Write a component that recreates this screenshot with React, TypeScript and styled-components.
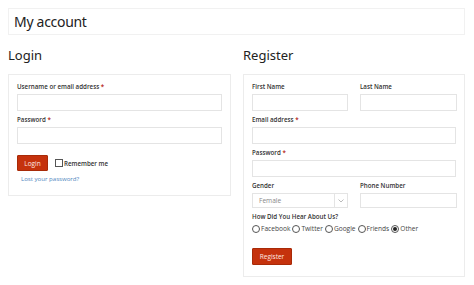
import styled, { createGlobalStyle } from 'styled-components';

const GlobalStyle = createGlobalStyle`
  html, body {
    margin: 0;
    padding: 0;
    background: #ffffff;
  }
  body {
    font-family: 'Open Sans', 'Noto Sans', sans-serif;
    color: #333333;
  }
`;

const Page = styled.div`
  width: 474px;
  height: 285px;
  box-sizing: border-box;
  padding: 8px 9px 0 8px;
  overflow: hidden;
`;

const TitleBar = styled.div`
  height: 27px;
  box-sizing: border-box;
  border: 1px solid #f1f1f1;
  display: flex;
  align-items: center;
  padding-left: 5px;
  font-family: 'Noto Sans', 'Open Sans', sans-serif;
  font-size: 14px;
  letter-spacing: -0.3px;
  color: #222222;
`;

const Columns = styled.div`
  display: grid;
  grid-template-columns: 223px 222px;
  column-gap: 12px;
  margin-top: 8px;
`;

const Column = styled.div`
  display: flex;
  flex-direction: column;
`;

const Heading = styled.h2`
  margin: 0 0 7px 0;
  height: 24px;
  display: flex;
  align-items: center;
  font-family: 'Noto Sans', 'Open Sans', sans-serif;
  font-weight: 400;
  font-size: 13px;
  color: #222222;
`;

const Card = styled.form`
  border: 1px solid #ececec;
  padding: 7px 8px 11px 8px;
  display: flex;
  flex-direction: column;
`;

const Row = styled.div`
  display: grid;
  grid-template-columns: 96px 97px;
  column-gap: 12px;
`;

const Field = styled.div`
  display: flex;
  flex-direction: column;
  margin-bottom: 4px;
`;

const Label = styled.label`
  font-size: 6.2px;
  line-height: 10px;
  font-weight: 600;
  color: #333333;
  margin-bottom: 2px;
`;

const Req = styled.span`
  color: #b5281a;
`;

const Input = styled.div<{ $h?: number }>`
  height: ${(p) => p.$h ?? 17}px;
  box-sizing: border-box;
  border: 1px solid #e4e4e4;
  background: #ffffff;
`;

const Select = styled.div`
  height: 15px;
  box-sizing: border-box;
  border: 1px solid #e4e4e4;
  display: flex;
  align-items: center;
  font-size: 6.6px;
  color: #888888;
`;

const SelectText = styled.span`
  flex: 1;
  padding-left: 6px;
`;

const SelectArrow = styled.span`
  width: 12px;
  height: 100%;
  border-left: 1px solid #e4e4e4;
  display: flex;
  align-items: center;
  justify-content: center;
`;

const ActionRow = styled.div<{ $top: number }>`
  display: flex;
  align-items: center;
  margin-top: ${(p) => p.$top}px;
  gap: 7px;
`;

const Button = styled.button<{ $w: number }>`
  width: ${(p) => p.$w}px;
  height: ${(p) => (p.$w > 35 ? 17 : 16)}px;
  padding: 0;
  border: 1px solid #a82a08;
  border-radius: 1px;
  background: #c5320d;
  color: #ffe9e2;
  font-family: 'Open Sans', sans-serif;
  font-size: 6.5px;
  cursor: pointer;
`;

const Check = styled.label`
  display: flex;
  align-items: center;
  gap: 1px;
  font-size: 6.2px;
  font-weight: 600;
  color: #333333;
`;

const Box = styled.span`
  width: 6px;
  height: 6px;
  border: 1px solid #555555;
  background: #ffffff;
`;

const LostLink = styled.a`
  display: block;
  margin: 3px 0 0 4px;
  font-size: 6.1px;
  line-height: 10px;
  color: #4f86be;
  text-decoration: none;
`;

const Radios = styled.div`
  display: flex;
  align-items: center;
  gap: 2px;
  font-size: 6.6px;
  line-height: 10px;
  color: #444444;
`;

const RadioItem = styled.span`
  display: flex;
  align-items: center;
  gap: 1px;
`;

const Dot = styled.span<{ $on?: boolean }>`
  width: 6px;
  height: 6px;
  border-radius: 50%;
  border: 1px solid #555555;
  display: flex;
  align-items: center;
  justify-content: center;
  &::after {
    content: '';
    width: 4px;
    height: 4px;
    border-radius: 50%;
    background: ${(p) => (p.$on ? '#222222' : 'transparent')};
  }
`;

const sources = ['Facebook', 'Twitter', 'Google', 'Friends', 'Other'];

export default function App() {
  return (
    <Page>
      <GlobalStyle />
      <TitleBar>My account</TitleBar>
      <Columns>
        <Column>
          <Heading>Login</Heading>
          <Card>
            <Field>
              <Label>
                Username or email address <Req>*</Req>
              </Label>
              <Input />
            </Field>
            <Field>
              <Label>
                Password <Req>*</Req>
              </Label>
              <Input />
            </Field>
            <ActionRow $top={7}>
              <Button type="button" $w={31}>Login</Button>
              <Check>
                <Box />
                Remember me
              </Check>
            </ActionRow>
            <LostLink href="#">Lost your password?</LostLink>
          </Card>
        </Column>
        <Column>
          <Heading>Register</Heading>
          <Card>
            <Row>
              <Field>
                <Label>First Name</Label>
                <Input />
              </Field>
              <Field>
                <Label>Last Name</Label>
                <Input />
              </Field>
            </Row>
            <Field>
              <Label>
                Email address <Req>*</Req>
              </Label>
              <Input />
            </Field>
            <Field>
              <Label>
                Password <Req>*</Req>
              </Label>
              <Input />
            </Field>
            <Row>
              <Field>
                <Label>Gender</Label>
                <Select>
                  <SelectText>Female</SelectText>
                  <SelectArrow>
                    <svg width="6" height="4" viewBox="0 0 6 4">
                      <path d="M0.5 0.5 L3 3 L5.5 0.5" fill="none" stroke="#aaaaaa" strokeWidth="0.8" />
                    </svg>
                  </SelectArrow>
                </Select>
              </Field>
              <Field>
                <Label>Phone Number</Label>
                <Input $h={15} />
              </Field>
            </Row>
            <Field>
              <Label>How Did You Hear About Us?</Label>
              <Radios>
                {sources.map((s) => (
                  <RadioItem key={s}>
                    <Dot $on={s === 'Other'} />
                    {s}
                  </RadioItem>
                ))}
              </Radios>
            </Field>
            <ActionRow $top={10}>
              <Button type="button" $w={40}>Register</Button>
            </ActionRow>
          </Card>
        </Column>
      </Columns>
    </Page>
  );
}
